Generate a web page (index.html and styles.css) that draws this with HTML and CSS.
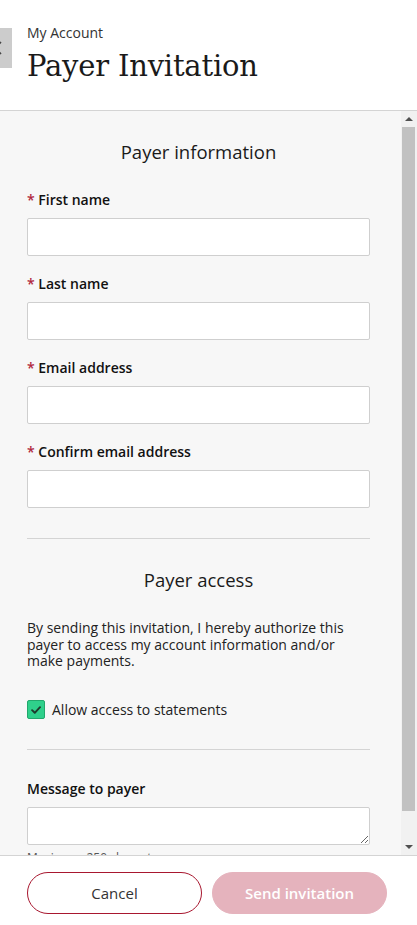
FILE: index.html
```html
<!DOCTYPE html>
<html lang="en">
<head>
<meta charset="utf-8">
<title>Payer Invitation</title>
<link rel="stylesheet" href="styles.css">
</head>
<body>
<div class="app">
  <header class="header">
    <button class="back" aria-label="Back"><svg class="chev" viewBox="0 0 8 14" width="8" height="14"><polyline points="7,1 1,7 7,13" fill="none" stroke="#444" stroke-width="1.6"/></svg></button>
    <div class="titles">
      <div class="crumb">My Account</div>
      <h1 class="title">Payer Invitation</h1>
    </div>
  </header>
  <div class="body-row">
    <main class="scroller">
      <form class="form">
        <h2 class="section-title">Payer information</h2>
        <div class="field">
          <label class="label"><span class="req">*</span> First name</label>
          <input class="input" type="text">
        </div>
        <div class="field">
          <label class="label"><span class="req">*</span> Last name</label>
          <input class="input" type="text">
        </div>
        <div class="field">
          <label class="label"><span class="req">*</span> Email address</label>
          <input class="input" type="text">
        </div>
        <div class="field">
          <label class="label"><span class="req">*</span> Confirm email address</label>
          <input class="input" type="text">
        </div>
        <hr class="divider">
        <h2 class="section-title">Payer access</h2>
        <p class="text">By sending this invitation, I hereby authorize this payer to access my account information and/or make payments.</p>
        <label class="check">
          <span class="box"><svg viewBox="0 0 16 16" width="14" height="14"><path d="M3.5 8.2 L6.6 11.2 L12.6 4.8" fill="none" stroke="#1d3b2c" stroke-width="2.2" stroke-linecap="round" stroke-linejoin="round"/></svg></span>
          <span>Allow access to statements</span>
        </label>
        <hr class="divider">
        <div class="field last">
          <label class="label">Message to payer</label>
          <textarea class="textarea"></textarea>
          <div class="hint">Maximum 250 characters</div>
        </div>
      </form>
    </main>
    <div class="fakebar" aria-hidden="true">
      <div class="sb-btn"><svg viewBox="0 0 8 8" width="8" height="8"><polygon points="0,6 8,6 4,2" fill="#505050"/></svg></div>
      <div class="sb-track"><div class="sb-thumb"></div></div>
      <div class="sb-btn"><svg viewBox="0 0 8 8" width="8" height="8"><polygon points="0,2 8,2 4,6" fill="#505050"/></svg></div>
    </div>
  </div>
  <footer class="footer">
    <button class="btn btn-outline" type="button">Cancel</button>
    <button class="btn btn-primary" type="button">Send invitation</button>
  </footer>
</div>
</body>
</html>
```
FILE: styles.css
```css
* { box-sizing: border-box; }
html, body { margin: 0; padding: 0; height: 100%; }
body {
  font-family: "Open Sans", "Noto Sans", sans-serif;
  color: #222;
  background: #fff;
  font-size: 14px;
}
.app {
  display: flex;
  flex-direction: column;
  height: 100vh;
}
.header {
  display: flex;
  align-items: flex-start;
  gap: 15px;
  padding-top: 23px;
  height: 111px;
  border-bottom: 1px solid #d4d4d4;
  flex: none;
  overflow: hidden;
}
.back {
  margin-left: -28px;
  margin-top: 5px;
  width: 40px;
  height: 40px;
  border: none;
  background: #cccccc;
  padding: 0;
  display: flex;
  align-items: center;
  justify-content: flex-end;
}
.chev { margin-right: 10px; display: block; }
.titles { display: flex; flex-direction: column; }
.crumb {
  font-size: 14px;
  line-height: 20px;
  color: #333;
}
.title {
  margin: 0;
  font-family: "DejaVu Serif", serif;
  font-weight: normal;
  font-size: 29px;
  line-height: 46px;
  color: #1a1a1a;
  letter-spacing: -0.2px;
}
.body-row {
  flex: 1;
  min-height: 0;
  display: flex;
  background: #f7f7f7;
}
.scroller {
  flex: 1;
  min-width: 0;
  overflow-y: auto;
  scrollbar-width: none;
}
.scroller::-webkit-scrollbar { display: none; }
.fakebar {
  flex: none;
  width: 16px;
  display: flex;
  flex-direction: column;
  background: #f1f1f1;
}
.sb-btn {
  height: 16px;
  flex: none;
  display: flex;
  align-items: center;
  justify-content: center;
}
.sb-btn svg { display: block; }
.sb-track {
  flex: 1;
  display: flex;
  flex-direction: column;
}
.sb-thumb {
  height: 684px;
  margin: 0 2px 0 1px;
  background: #c1c1c1;
}
.form {
  padding: 29px 31px 4px 27px;
  display: flex;
  flex-direction: column;
}
.section-title {
  margin: 0;
  text-align: center;
  font-size: 18.5px;
  line-height: 24px;
  font-weight: 500;
  color: #1a1a1a;
}
.section-title + .field { margin-top: 26px; }
.field { display: flex; flex-direction: column; }
.field + .field { margin-top: 18px; }
.label {
  font-weight: 600;
  font-size: 14px;
  line-height: 20px;
  color: #111;
  margin-bottom: 8px;
}
.req { color: #b0283e; }
.input {
  height: 38px;
  border: 1px solid #cfcfcf;
  border-radius: 2px;
  background: #fff;
  font: inherit;
}
.divider {
  border: none;
  border-top: 1px solid #d4d4d4;
  margin: 30px 0 29px;
  width: 100%;
}
.check + .divider { margin-top: 29px; }
.text {
  margin: 28px 0 0;
  font-size: 14px;
  line-height: 16.5px;
  color: #222;
}
.check {
  margin-top: 30px;
  display: flex;
  align-items: center;
  gap: 7px;
  font-size: 14px;
  line-height: 20px;
  color: #222;
}
.box {
  width: 18px;
  height: 19px;
  background: #2fd08b;
  border: 1px solid #22a86c;
  border-radius: 2px;
  display: flex;
  align-items: center;
  justify-content: center;
}
.textarea {
  height: 38px;
  border: 1px solid #cfcfcf;
  border-radius: 2px;
  background: #fff;
  font: inherit;
  resize: vertical;
}
.hint {
  margin-top: 4px;
  font-size: 12px;
  line-height: 18px;
  color: #555;
}
.footer {
  flex: none;
  height: 70px;
  border-top: 1px solid #d4d4d4;
  display: grid;
  grid-template-columns: 175px 175px;
  gap: 10px;
  padding: 16px 30px 0 27px;
  align-content: start;
}
.btn {
  height: 42px;
  border-radius: 21px;
  font-family: "Open Sans", sans-serif;
  font-size: 15px;
}
.btn-outline {
  background: #fff;
  border: 1px solid #a8172f;
  color: #333;
}
.btn-primary {
  background: #e5b3bd;
  border: 1px solid #e5b3bd;
  color: #fff;
  font-weight: 600;
}
```
